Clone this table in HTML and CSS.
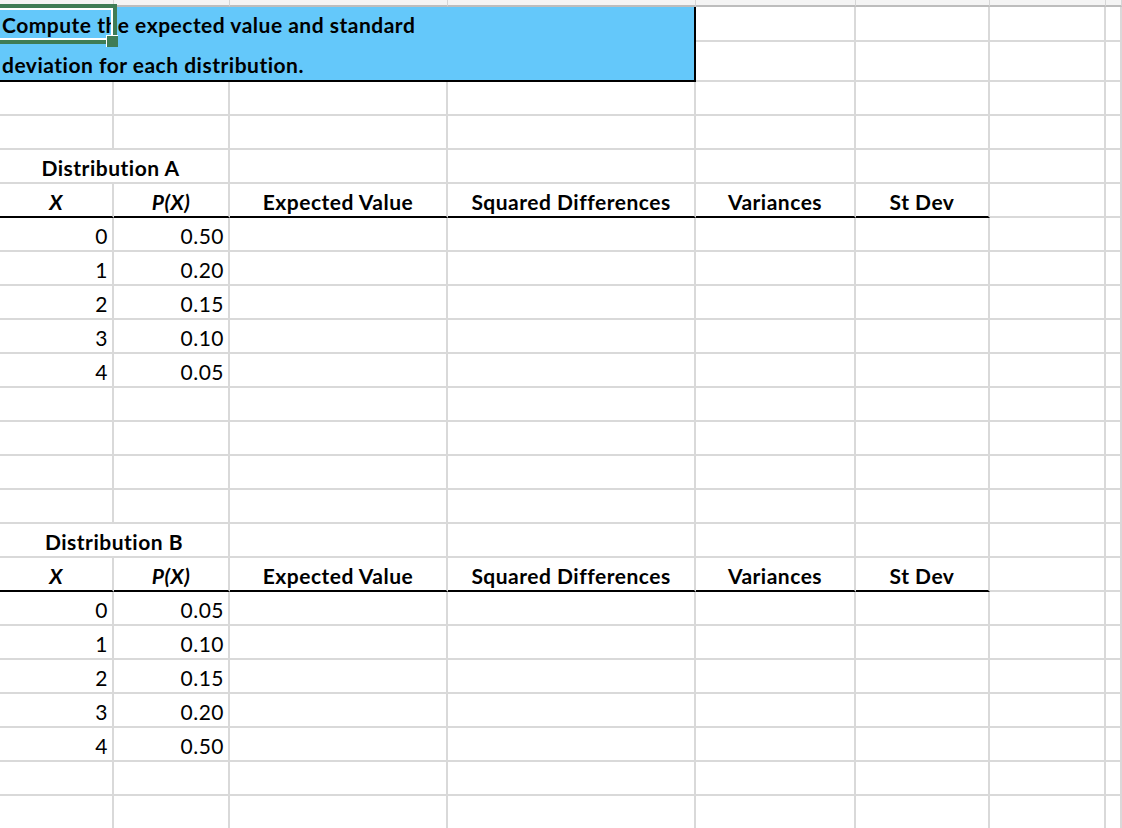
FILE: index.html
```html
<!DOCTYPE html>
<html>
<head>
<meta charset="utf-8">
<link rel="stylesheet" href="styles.css">
</head>
<body>
<div class="sheet">
  <div class="row colhead">
    <div class="c"></div><div class="c"></div><div class="c"></div><div class="c"></div><div class="c"></div><div class="c"></div><div class="c"></div><div class="c"></div>
  </div>

  <div class="top">
    <div class="task">
      <div class="task-line">Compute the expected value and standard</div>
      <div class="task-line">deviation for each distribution.</div>
    </div>
    <div class="c"></div><div class="c"></div><div class="c"></div><div class="c"></div>
    <div class="c"></div><div class="c"></div><div class="c"></div><div class="c"></div>
  </div>

  <div class="row"><div class="c"></div><div class="c"></div><div class="c"></div><div class="c"></div><div class="c"></div><div class="c"></div><div class="c"></div><div class="c"></div></div>
  <div class="row"><div class="c"></div><div class="c"></div><div class="c"></div><div class="c"></div><div class="c"></div><div class="c"></div><div class="c"></div><div class="c"></div></div>

  <!-- Distribution A -->
  <div class="row"><div class="c span2 title title-a">Distribution A</div><div class="c"></div><div class="c"></div><div class="c"></div><div class="c"></div><div class="c"></div><div class="c"></div></div>
  <div class="row head">
    <div class="c hd it">X</div><div class="c hd it">P(X)</div><div class="c hd">Expected Value</div><div class="c hd">Squared Differences</div><div class="c hd">Variances</div><div class="c hd">St Dev</div><div class="c"></div><div class="c"></div>
  </div>
  <div class="row"><div class="c num">0</div><div class="c num">0.50</div><div class="c"></div><div class="c"></div><div class="c"></div><div class="c"></div><div class="c"></div><div class="c"></div></div>
  <div class="row"><div class="c num">1</div><div class="c num">0.20</div><div class="c"></div><div class="c"></div><div class="c"></div><div class="c"></div><div class="c"></div><div class="c"></div></div>
  <div class="row"><div class="c num">2</div><div class="c num">0.15</div><div class="c"></div><div class="c"></div><div class="c"></div><div class="c"></div><div class="c"></div><div class="c"></div></div>
  <div class="row"><div class="c num">3</div><div class="c num">0.10</div><div class="c"></div><div class="c"></div><div class="c"></div><div class="c"></div><div class="c"></div><div class="c"></div></div>
  <div class="row"><div class="c num">4</div><div class="c num">0.05</div><div class="c"></div><div class="c"></div><div class="c"></div><div class="c"></div><div class="c"></div><div class="c"></div></div>

  <div class="row"><div class="c"></div><div class="c"></div><div class="c"></div><div class="c"></div><div class="c"></div><div class="c"></div><div class="c"></div><div class="c"></div></div>
  <div class="row"><div class="c"></div><div class="c"></div><div class="c"></div><div class="c"></div><div class="c"></div><div class="c"></div><div class="c"></div><div class="c"></div></div>
  <div class="row"><div class="c"></div><div class="c"></div><div class="c"></div><div class="c"></div><div class="c"></div><div class="c"></div><div class="c"></div><div class="c"></div></div>
  <div class="row"><div class="c"></div><div class="c"></div><div class="c"></div><div class="c"></div><div class="c"></div><div class="c"></div><div class="c"></div><div class="c"></div></div>

  <!-- Distribution B -->
  <div class="row"><div class="c span2 title">Distribution B</div><div class="c"></div><div class="c"></div><div class="c"></div><div class="c"></div><div class="c"></div><div class="c"></div></div>
  <div class="row head">
    <div class="c hd it">X</div><div class="c hd it">P(X)</div><div class="c hd">Expected Value</div><div class="c hd">Squared Differences</div><div class="c hd">Variances</div><div class="c hd">St Dev</div><div class="c"></div><div class="c"></div>
  </div>
  <div class="row"><div class="c num">0</div><div class="c num">0.05</div><div class="c"></div><div class="c"></div><div class="c"></div><div class="c"></div><div class="c"></div><div class="c"></div></div>
  <div class="row"><div class="c num">1</div><div class="c num">0.10</div><div class="c"></div><div class="c"></div><div class="c"></div><div class="c"></div><div class="c"></div><div class="c"></div></div>
  <div class="row"><div class="c num">2</div><div class="c num">0.15</div><div class="c"></div><div class="c"></div><div class="c"></div><div class="c"></div><div class="c"></div><div class="c"></div></div>
  <div class="row"><div class="c num">3</div><div class="c num">0.20</div><div class="c"></div><div class="c"></div><div class="c"></div><div class="c"></div><div class="c"></div><div class="c"></div></div>
  <div class="row"><div class="c num">4</div><div class="c num">0.50</div><div class="c"></div><div class="c"></div><div class="c"></div><div class="c"></div><div class="c"></div><div class="c"></div></div>

  <div class="row"><div class="c"></div><div class="c"></div><div class="c"></div><div class="c"></div><div class="c"></div><div class="c"></div><div class="c"></div><div class="c"></div></div>
  <div class="row"><div class="c"></div><div class="c"></div><div class="c"></div><div class="c"></div><div class="c"></div><div class="c"></div><div class="c"></div><div class="c"></div></div>

  <div class="selection"></div>
  <div class="handle"></div>
</div>
</body>
</html>
```

FILE: styles.css
```css
html, body {
  margin: 0;
  padding: 0;
  background: #ffffff;
}

.sheet {
  position: relative;
  width: 1122px;
  height: 828px;
  overflow: hidden;
  font-family: Lato, "Open Sans", "Liberation Sans", sans-serif;
  font-size: 21px;
  letter-spacing: 0.5px;
  color: #000;
  --cols: 114px 116px 218px 248px 160px 134px 116px 1fr;
}

.row {
  display: grid;
  grid-template-columns: var(--cols);
  height: 34px;
}

.c {
  box-sizing: border-box;
  border-right: 2px solid #d9d9d9;
  border-bottom: 2px solid #d9d9d9;
  display: flex;
  align-items: flex-end;
  line-height: 20px;
  padding: 0 5px 4px 5px;
  white-space: nowrap;
  min-width: 0;
}

/* column header strip at the very top */
.colhead {
  height: 7px;
}
.colhead .c {
  background: #f4f4f4;
  border-right: 1px solid #d6d6d6;
  border-bottom: 2px solid #bdbdbd;
  padding: 0;
}

/* the merged, filled task cell */
.top {
  display: grid;
  grid-template-columns: var(--cols);
  grid-template-rows: 35px 40px;
}
.task {
  grid-column: 1 / 5;
  grid-row: 1 / 3;
  box-sizing: border-box;
  background: #64c8fa;
  border-right: 2px solid #000;
  border-bottom: 2px solid #000;
  padding: 0 0 0 2px;
  font-weight: 700;
}
.task-line {
  line-height: 40px;
  white-space: nowrap;
}
.task-line:first-child {
  margin-top: -2px;
}

/* section titles centered across columns A-B */
.span2 {
  grid-column: span 2;
}
.title {
  justify-content: center;
  font-weight: 700;
  padding-bottom: 4px;
}
.title-a {
  padding-right: 12px;
}

/* header row with the black underline */
.head .c:nth-child(-n+6) {
  border-bottom: 2px solid #000;
}
.hd {
  justify-content: center;
  font-weight: 700;
  padding-bottom: 4px;
}
.it {
  font-style: italic;
}

.num {
  justify-content: flex-end;
  padding-right: 4px;
}

/* active cell selection overlay */
.selection {
  position: absolute;
  left: -10px;
  top: 4px;
  width: 127px;
  height: 40px;
  box-sizing: border-box;
  border: 4px solid #3f7c55;
  box-shadow: inset 0 0 0 2px #ffffff;
  pointer-events: none;
}
.handle {
  position: absolute;
  left: 106px;
  top: 35px;
  width: 12px;
  height: 12px;
  box-sizing: border-box;
  background: #3f7c55;
  border-left: 1px solid #ffffff;
  border-top: 1px solid #ffffff;
}
```
